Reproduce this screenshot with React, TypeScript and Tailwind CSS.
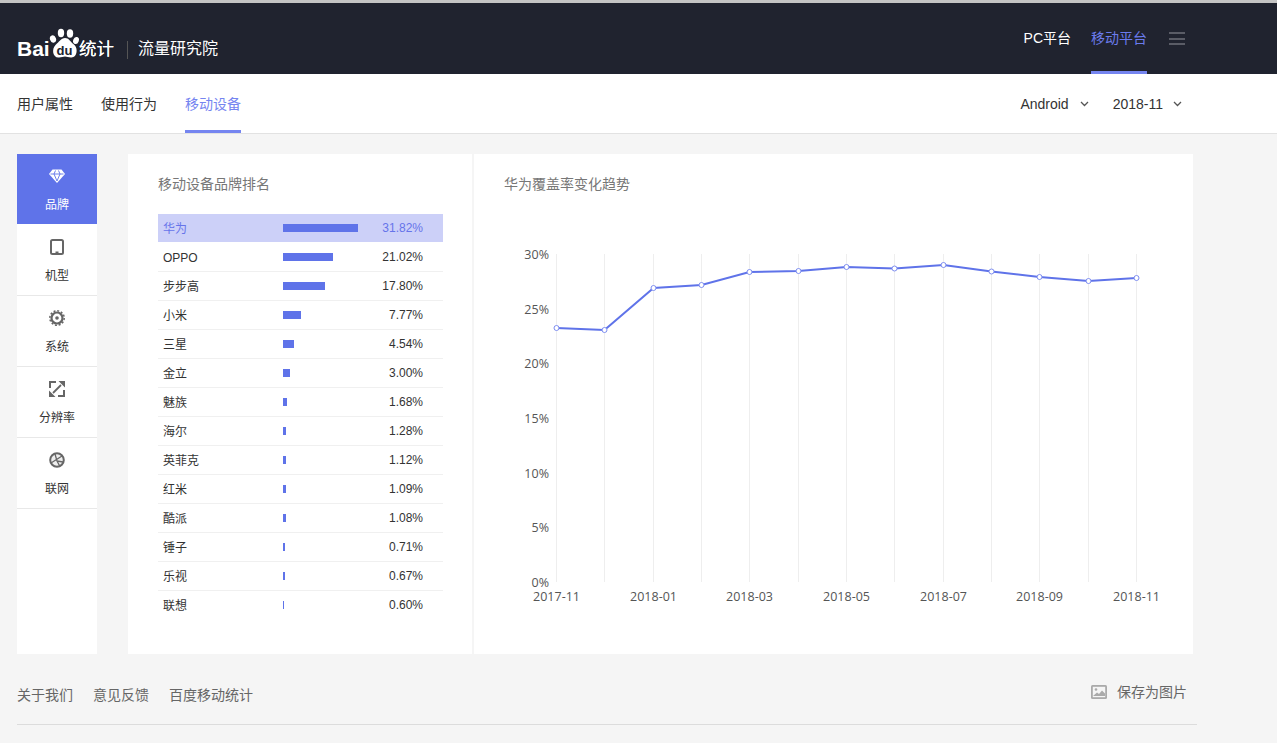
// Baidu mobile stats: device brand ranking page
import React from 'react';

const font = { fontFamily: '"Liberation Sans","Noto Sans CJK SC",sans-serif' };

const brands = [
  ['华为', 75, '31.82%'],
  ['OPPO', 50, '21.02%'],
  ['步步高', 42, '17.80%'],
  ['小米', 18, '7.77%'],
  ['三星', 11, '4.54%'],
  ['金立', 7, '3.00%'],
  ['魅族', 4, '1.68%'],
  ['海尔', 3, '1.28%'],
  ['英菲克', 3, '1.12%'],
  ['红米', 3, '1.09%'],
  ['酷派', 3, '1.08%'],
  ['锤子', 2, '0.71%'],
  ['乐视', 2, '0.67%'],
  ['联想', 1, '0.60%'],
] as const;

function DiamondIcon() {
  return (
    <svg width="16" height="14" viewBox="0 0 16 14">
      <path d="M3.500 0.500h9L16 5l-8 9-8-9z" fill="#fff" />
      <path d="M1.500 5h13M5 5l3 7 3-7M5 5l1.500-3.500M11 5L9.500 1.500" stroke="#5f73e9" strokeWidth="0.9" fill="none" />
    </svg>
  );
}

function TabletIcon() {
  return (
    <svg width="14" height="16" viewBox="0 0 14 16">
      <rect x="1" y="1" width="12" height="14" rx="1.500" fill="none" stroke="#666" strokeWidth="2" />
      <rect x="5.500" y="12.500" width="3" height="2" fill="#666" />
    </svg>
  );
}

function GearIcon() {
  return (
    <svg width="16" height="16" viewBox="0 0 16 16">
      <circle cx="8" cy="8" r="5.500" fill="none" stroke="#666" strokeWidth="2.200" />
      <circle cx="8" cy="8" r="7.200" fill="none" stroke="#666" strokeWidth="1.500" strokeDasharray="2 1.770" />
      <circle cx="8" cy="8" r="1.800" fill="#666" />
    </svg>
  );
}

function ResizeIcon() {
  return (
    <svg width="16" height="16" viewBox="0 0 16 16" fill="none" stroke="#666" strokeWidth="2">
      <path d="M1 7V1h6M15 9v6H9" />
      <path d="M4 12l8-8" strokeWidth="1.800" />
      <path d="M9.500 0H16v6.500zM0 9.500V16h6.500z" fill="#666" stroke="none" />
    </svg>
  );
}

function GlobeIcon() {
  return (
    <svg width="16" height="16" viewBox="0 0 16 16">
      <circle cx="8" cy="8" r="6.800" fill="#eee" stroke="#666" strokeWidth="2" />
      <path d="M2 11l11-7M6 2l2 7 3 5.500M8 9l6 1" stroke="#666" strokeWidth="1.300" fill="none" />
    </svg>
  );
}

function ImageIcon() {
  return (
    <svg width="16" height="14" viewBox="0 0 16 14">
      <rect x="0" y="0" width="16" height="14" rx="1.500" fill="#aaa" />
      <rect x="1.800" y="1.800" width="12.400" height="10.400" fill="#f5f5f5" />
      <circle cx="5" cy="4.500" r="1.300" fill="#aaa" />
      <path d="M2 11l4-3.500 2 1.500 3-3.500 3 3v2.500z" fill="#aaa" />
    </svg>
  );
}

function Chevron() {
  return (
    <svg width="9" height="6" viewBox="0 0 9 6" fill="none" stroke="#555" strokeWidth="1.300">
      <path d="M1 1l3.500 3.500L8 1" />
    </svg>
  );
}

function Logo() {
  return (
    <div className="flex items-end text-white">
      <span className="w-[32px] text-[21px] font-bold leading-[22px]">Bai</span>
      <svg width="31" height="32" viewBox="0 0 31 32">
        <ellipse cx="4" cy="11" rx="3" ry="3.800" fill="#fff" transform="rotate(-20 4 11)" />
        <ellipse cx="12" cy="5" rx="3.200" ry="4.200" fill="#fff" />
        <ellipse cx="21" cy="5.500" rx="3.200" ry="4.200" fill="#fff" />
        <ellipse cx="27" cy="12.500" rx="2.800" ry="3.600" fill="#fff" transform="rotate(20 27 12.500)" />
        <path d="M16 10c4 0 5 3.500 9.500 7 3.500 3 3 13-3.500 12.500-2.500 0-4-1-6-1s-3.500 1-6 1c-6.500 .5-7.500-8.500-3.500-12.500 3.500-3 5.500-7 9.500-7z" fill="#fff" />
        <text x="15.500" y="26.500" textAnchor="middle" fontSize="13" fontWeight="700" fill="#20232f" fontFamily="Liberation Sans">du</text>
      </svg>
      <span className="-ml-px text-[17.5px] font-normal leading-[22px] [text-shadow:0_0_0.6px_#fff]">统计</span>
    </div>
  );
}

function SideItem({ label, icon, active }: { label: string; icon: React.ReactNode; active?: boolean }) {
  return (
    <div className={`h-[71px] flex flex-col items-center border-b ${active ? 'bg-[#5f73e9] text-white border-white' : 'text-[#333] border-[#e8e8e8]'}`}>
      <div className="h-[16px] mt-[14px] flex items-center">{icon}</div>
      <div className="text-xs leading-[18px] mt-[12px]">{label}</div>
    </div>
  );
}

function TrendChart() {
  const xs = Array.from({ length: 13 }, (_, i) => Math.round(556 + i * 48.33) + 0.5);
  const ys = [328, 330, 288, 285, 272, 271, 267, 268.5, 265, 271.5, 277, 281, 278];
  const yLabels = ['30%', '25%', '20%', '15%', '10%', '5%', '0%'];
  const yPos = [254, 309, 363, 418, 473, 527, 582];
  const xLabels = ['2017-11', '2018-01', '2018-03', '2018-05', '2018-07', '2018-09', '2018-11'];
  return (
    <svg width="719" height="500" viewBox="474 154 719 500" className="absolute inset-0">
      {xs.map((x) => (
        <line key={x} x1={x} x2={x} y1={254} y2={582} stroke="#eeeeee" />
      ))}
      {yLabels.map((l, i) => (
        <text key={l} x={549} y={yPos[i] + 5} textAnchor="end" fontSize="12.500" fill="#555" fontFamily="Open Sans, sans-serif">{l}</text>
      ))}
      {xLabels.map((l, i) => (
        <text key={l} x={xs[i * 2]} y={601} textAnchor="middle" fontSize="12.500" fill="#555" fontFamily="Open Sans, sans-serif">{l}</text>
      ))}
      <polyline points={xs.map((x, i) => `${x},${ys[i]}`).join(' ')} fill="none" stroke="#5f73e9" strokeWidth="2" />
      {xs.map((x, i) => (
        <circle key={x} cx={x} cy={ys[i]} r="2.500" fill="#fff" stroke="#7d8df0" strokeWidth="1" />
      ))}
    </svg>
  );
}

export default function App() {
  return (
    <div className="h-[743px] w-full overflow-hidden bg-[#f5f5f5]" style={font}>
      <div className="h-[3px] bg-[#c4c4c4]" />
      <header className="h-[71px] bg-[#20232f] flex justify-between pl-[17px] pr-[92px]">
        <div className="flex items-end pb-[14px]">
          <Logo />
          <div className="w-px h-[18px] bg-[#555] ml-[13px] mr-[10px] mb-[1px]" />
          <span className="text-base leading-[22px] text-white">流量研究院</span>
        </div>
        <div className="flex items-start text-sm">
          <span className="text-white leading-[70px]">PC平台</span>
          <span className="ml-5 h-full leading-[70px] text-[#6b7bec] border-b-[3px] border-[#7585f0]">移动平台</span>
          <div className="ml-[22px] mt-[29px] w-4 h-[13px] flex flex-col justify-between">
            <div className="h-[2px] bg-[#5a5c66]" />
            <div className="h-[2px] bg-[#5a5c66]" />
            <div className="h-[2px] bg-[#5a5c66]" />
          </div>
        </div>
      </header>

      <nav className="h-[60px] bg-white border-b border-[#e2e2e2] flex justify-between pl-[17px] pr-[95px] text-sm text-[#333]">
        <div className="flex gap-7">
          <span className="leading-[60px]">用户属性</span>
          <span className="leading-[60px]">使用行为</span>
          <span className="h-[59px] leading-[60px] text-[#7585f0] border-b-[3px] border-[#7585f0]">移动设备</span>
        </div>
        <div className="flex items-center gap-6">
          <div className="flex items-center gap-[11px]">Android <Chevron /></div>
          <div className="flex items-center gap-[10px]">2018-11 <Chevron /></div>
        </div>
      </nav>

      <main className="flex px-[17px] pt-5">
        <aside className="w-20 h-[500px] bg-white">
          <SideItem label="品牌" icon={<DiamondIcon />} active />
          <SideItem label="机型" icon={<TabletIcon />} />
          <SideItem label="系统" icon={<GearIcon />} />
          <SideItem label="分辨率" icon={<ResizeIcon />} />
          <SideItem label="联网" icon={<GlobeIcon />} />
        </aside>

        <section className="ml-[31px] w-[344px] h-[500px] bg-white px-[30px] pt-[21px]">
          <h2 className="text-sm leading-[18px] font-normal text-[#777]">移动设备品牌排名</h2>
          <div className="mt-[21px] w-[285px] text-xs">
            {brands.map(([name, width, pct], i) => (
              <div
                key={name}
                className={`h-[29px] flex items-center pl-[5px] pr-5 border-b ${i === 0 ? 'bg-[#ccd0f8] text-[#6674ea] border-white' : i === brands.length - 1 ? 'text-[#333] border-transparent' : 'text-[#333] border-[#f0f0f0]'}`}
              >
                <span className="w-[120px] pt-[2px]">{name}</span>
                <div className="flex-1">
                  <div className="h-2 bg-[#5f73e9]" style={{ width }} />
                </div>
                <span>{pct}</span>
              </div>
            ))}
          </div>
        </section>

        <section className="relative ml-[2px] w-[719px] h-[500px] bg-white pl-[30px] pt-[21px]">
          <TrendChart />
          <h2 className="relative text-sm leading-[18px] font-normal text-[#777]">华为覆盖率变化趋势</h2>
        </section>
      </main>

      <footer className="mx-[17px] w-[1180px] h-[71px] border-b border-[#dcdcdc] flex justify-between text-sm text-[#666]">
        <div className="flex gap-5 pt-[32px] leading-[18px]">
          <span>关于我们</span>
          <span>意见反馈</span>
          <span>百度移动统计</span>
        </div>
        <div className="flex items-start gap-[10px] pt-[29px] pr-[10px] leading-[18px]">
          <span className="mt-[2px]"><ImageIcon /></span>
          <span>保存为图片</span>
        </div>
      </footer>
    </div>
  );
}
